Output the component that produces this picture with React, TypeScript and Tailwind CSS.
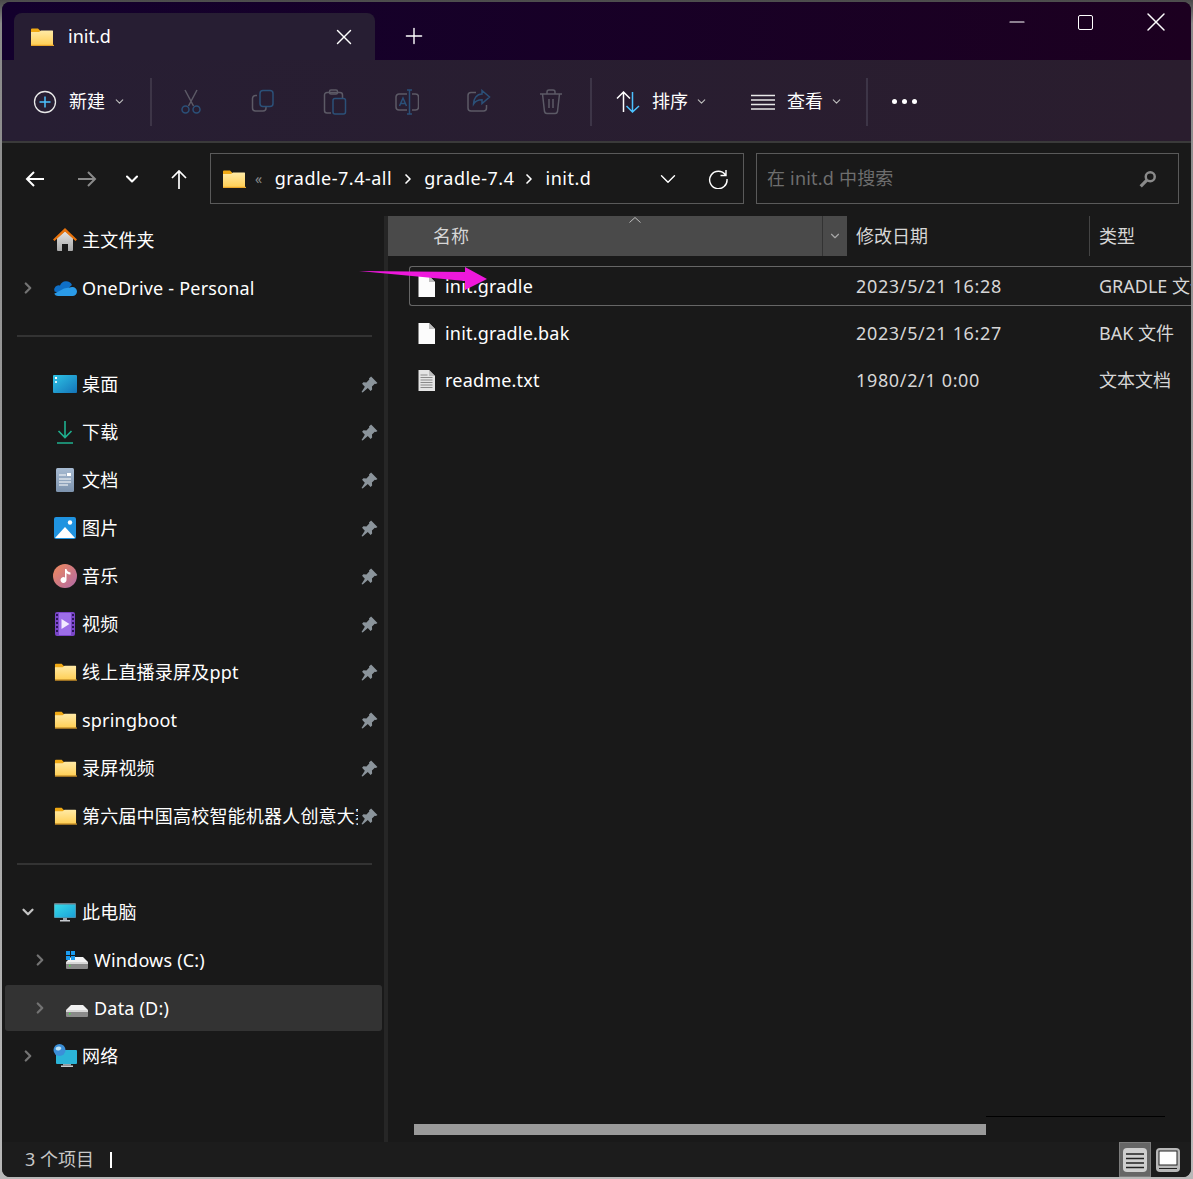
import type { ReactNode } from "react"
import { ChevronDown, ChevronRight, Minus, Plus, X } from "lucide-react"

const font = "font-['Noto_Sans','Noto_Sans_CJK_SC',sans-serif]"

function Folder({ className = "w-6 h-[18px]" }: { className?: string }) {
  return (
    <svg viewBox="0 0 24 18" className={className}>
      <defs>
        <linearGradient id="fold" x1="0" y1="0" x2="0" y2="1">
          <stop offset="0" stopColor="#ffeaa6" />
          <stop offset="1" stopColor="#ffcf56" />
        </linearGradient>
      </defs>
      <path d="M1 1.500Q1 .5 2 .5h6l2.500 2.500H23v3H1z" fill="#f0a914" />
      <path d="M1 4h8l2-1.500h11.500q.5 0 .5.5v13.500q0 .5-.5.5H1.500q-.5 0-.5-.5z" fill="url(#fold)" />
      <rect x="1" y="16.800" width="23" height="1.200" fill="#e9a52a" />
    </svg>
  )
}

// toolbar icons, greyed out because nothing is selected
const dim = "#5c5a66"
const dimBlue = "#2b5078"

function CutIcon() {
  return (
    <svg viewBox="0 0 24 26" className="w-6 h-[26px]" fill="none" strokeWidth="1.500">
      <path d="M6 1l8.500 16M18 1L9.500 17" stroke={dim} />
      <circle cx="6.500" cy="20.500" r="3.500" stroke={dimBlue} />
      <circle cx="17.500" cy="20.500" r="3.500" stroke={dimBlue} />
    </svg>
  )
}

function CopyIcon() {
  return (
    <svg viewBox="0 0 24 24" className="w-6 h-6" fill="none" strokeWidth="1.500">
      <path d="M6 6.500H4.500a3 3 0 0 0-3 3V19a3 3 0 0 0 3 3H12a3 3 0 0 0 3-3v-1" stroke={dim} />
      <rect x="9" y="1.500" width="13" height="16" rx="3" stroke={dimBlue} />
    </svg>
  )
}

function PasteIcon() {
  return (
    <svg viewBox="0 0 24 26" className="w-6 h-[26px]" fill="none" strokeWidth="1.500">
      <path d="M8 24H4a2.500 2.500 0 0 1-2.500-2.500V6A2.500 2.500 0 0 1 4 3.500h13A2.500 2.500 0 0 1 19.500 6v3" stroke={dim} />
      <rect x="6.500" y="1" width="8" height="4" rx="1.500" stroke={dim} />
      <rect x="10" y="9.500" width="12.500" height="15.500" rx="2" stroke={dimBlue} />
    </svg>
  )
}

function RenameIcon() {
  return (
    <svg viewBox="0 0 24 26" className="w-6 h-[26px]" fill="none" strokeWidth="1.500">
      <path d="M12 5H4a3 3 0 0 0-3 3v10a3 3 0 0 0 3 3h8M17 5h3.500a3 3 0 0 1 3 3v10a3 3 0 0 1-3 3H17" stroke={dim} />
      <path d="M12 1h5M14.500 1v24M12 25h5M4.500 17L8 9l3.500 8M5.800 14.500h4.400" stroke={dimBlue} />
    </svg>
  )
}

function ShareIcon() {
  return (
    <svg viewBox="0 0 24 24" className="w-6 h-6" fill="none" strokeWidth="1.500">
      <path d="M9 3.500H4a3 3 0 0 0-3 3V19a3 3 0 0 0 3 3h12.500a3 3 0 0 0 3-3v-3" stroke={dim} />
      <path d="M15 1.500l7.500 6.500-7.500 6.500v-3.800c-4 0-6.500 1-8.500 4.300 0-5 3-10 8.500-10z" stroke={dimBlue} />
    </svg>
  )
}

function TrashIcon() {
  return (
    <svg viewBox="0 0 24 26" className="w-6 h-[26px]" fill="none" stroke={dim} strokeWidth="1.500">
      <path d="M1 5h22M8 5V3a2 2 0 0 1 2-2h4a2 2 0 0 1 2 2v2M3.500 5l2 17.500a2.500 2.500 0 0 0 2.500 2h8a2.500 2.500 0 0 0 2.500-2L20.500 5M10 10v9M14 10v9" />
    </svg>
  )
}

function SortIcon() {
  return (
    <svg viewBox="0 0 24 22" className="w-6 h-[22px]" fill="none" strokeWidth="1.500">
      <path d="M7.500 21V1M1 7.500L7.500 1 14 7.500" stroke="#fff" />
      <path d="M16.500 1v20M10.500 15l6 6 6.500-6" stroke="#4cc2ff" />
    </svg>
  )
}

function PinIcon() {
  return (
    <svg viewBox="0 0 16 16" className="w-[17px] h-[17px]" fill="#8b949b">
      <path d="M9.500 0.500l6 6-1.500 1-1-.3-2.700 2.700.2 2.800-1.500 1.300-2.600-2.600L1.500 15.500.5 15l3.100-5-2.600-2.600 1.300-1.500 2.800.2L7.800 3.400l-.3-1.100z" />
    </svg>
  )
}

function HomeIcon() {
  return (
    <svg viewBox="0 0 24 24" className="w-6 h-6">
      <defs>
        <linearGradient id="wall" x1="0" y1="0" x2="0" y2="1">
          <stop offset="0" stopColor="#e4e4e4" />
          <stop offset="1" stopColor="#a8a8a8" />
        </linearGradient>
      </defs>
      <path d="M4 10l8-7 8 7v12a1 1 0 0 1-1 1h-4v-7H9v7H5a1 1 0 0 1-1-1z" fill="url(#wall)" />
      <path d="M0 11.500L12 0l12 11.500-1.500 1.500L12 3.500 1.500 13z" fill="#e8730c" />
    </svg>
  )
}

function CloudIcon() {
  return (
    <svg viewBox="0 0 24 16" className="w-6 h-4">
      <path d="M7 5.500A6.500 6.500 0 0 1 19 5l-8 7-6 .5-3.500-1A4.500 4.500 0 0 1 7 5.500z" fill="#0f6fc6" />
      <path d="M5 16a4.500 4.500 0 0 1-3.800-2.200L11 8.500l8-1.500a4.500 4.500 0 0 1 5 4.500A4.500 4.500 0 0 1 19.500 16z" fill="#2a9be8" />
    </svg>
  )
}

function DesktopIcon() {
  return (
    <svg viewBox="0 0 24 18" className="w-6 h-[18px]">
      <defs>
        <linearGradient id="desk" x1="0" y1="0" x2="1" y2="1">
          <stop offset="0" stopColor="#2ec4e6" />
          <stop offset="1" stopColor="#1473b8" />
        </linearGradient>
      </defs>
      <rect width="24" height="18" rx="1" fill="url(#desk)" />
      <rect x="2" y="2" width="2" height="2" fill="#fff" />
      <rect x="2" y="6" width="2" height="2" fill="#cfeffa" />
    </svg>
  )
}

function DownloadIcon() {
  return (
    <svg viewBox="0 0 16 23" className="w-4 h-[23px]" fill="none" stroke="#1fb08f" strokeWidth="1.600">
      <path d="M8 0v16M1.500 10L8 16.500 14.500 10M0 22h16" />
    </svg>
  )
}

function DocIcon() {
  return (
    <svg viewBox="0 0 18 24" className="w-[18px] h-6">
      <defs>
        <linearGradient id="doc" x1="0" y1="0" x2="0" y2="1">
          <stop offset="0" stopColor="#a7bbd2" />
          <stop offset="1" stopColor="#7d93ad" />
        </linearGradient>
      </defs>
      <rect width="18" height="24" rx="1.500" fill="url(#doc)" />
      <path d="M3 7h7M3 11h12M3 14h12M3 17h9" stroke="#fff" strokeWidth="1.200" />
      <rect x="11" y="5" width="4" height="3" fill="#fff" />
    </svg>
  )
}

function PictureIcon() {
  return (
    <svg viewBox="0 0 22 22" className="w-[22px] h-[22px]">
      <rect width="22" height="22" rx="2" fill="#1f93e0" />
      <circle cx="16" cy="5.500" r="2.200" fill="#fff" />
      <path d="M1 21L11 10l10 11z" fill="#fff" />
    </svg>
  )
}

function MusicIcon() {
  return (
    <svg viewBox="0 0 24 24" className="w-6 h-6">
      <defs>
        <linearGradient id="music" x1="0" y1="0" x2="1" y2="1">
          <stop offset="0" stopColor="#f0895a" />
          <stop offset="1" stopColor="#b06aa8" />
        </linearGradient>
      </defs>
      <circle cx="12" cy="12" r="12" fill="url(#music)" />
      <path d="M12 5h1.500c.3 2 1.500 3 4 3.500v2c-1.500 0-3-.5-4-1.500v7a3 3 0 1 1-1.500-2.600z" fill="#fff" />
    </svg>
  )
}

function VideoIcon() {
  return (
    <svg viewBox="0 0 20 24" className="w-5 h-6">
      <rect width="20" height="24" rx="2" fill="#7a45c8" />
      <rect x="4" y="1" width="12" height="22" fill="#9d6ee8" />
      <path d="M6.500 7l8 5-8 5z" fill="#f2eaff" />
      <path d="M1 3h2M1 7h2M1 11h2M1 15h2M1 19h2M17 3h2M17 7h2M17 11h2M17 15h2M17 19h2" stroke="#2a1458" strokeWidth="2" />
    </svg>
  )
}

function MonitorIcon() {
  return (
    <svg viewBox="0 0 22 19" className="w-[22px] h-[19px]">
      <defs>
        <linearGradient id="pc" x1="0" y1="0" x2="1" y2="1">
          <stop offset="0" stopColor="#37dbe9" />
          <stop offset="1" stopColor="#1a9fd6" />
        </linearGradient>
      </defs>
      <rect width="22" height="15" rx="1" fill="#6d7a84" />
      <rect x="0.500" y="1.500" width="21" height="13" fill="url(#pc)" />
      <rect x="9" y="15" width="4" height="2" fill="#9aa2a8" />
      <rect x="6" y="17" width="10" height="1.500" fill="#c8ccd0" />
    </svg>
  )
}

function DriveIcon({ windows }: { windows?: boolean }) {
  return (
    <svg viewBox="0 0 22 18" className="w-[22px] h-[18px]">
      <path d="M0 11L5 6h12l5 5z" fill="#f2f2f2" />
      <rect y="11" width="22" height="7" rx="1" fill="#8a8a8a" />
      <rect y="11" width="22" height="2" fill="#d8d8d8" />
      <rect x="3" y="14" width="1.500" height="1.500" fill="#3fe03f" />
      {windows && <path d="M0 0h4v4H0zM5 0h4v4H5zM0 5h4v4H0zM5 5h4v4H5z" fill="#1c9cef" />}
    </svg>
  )
}

function NetworkIcon() {
  return (
    <svg viewBox="0 0 24 24" className="w-6 h-6">
      <rect x="3" y="6" width="21" height="14" rx="1" fill="#2bb4d8" />
      <rect x="10" y="20" width="8" height="1.500" fill="#9aa2a8" />
      <rect x="8" y="21.500" width="12" height="1.500" fill="#c8ccd0" />
      <circle cx="6.500" cy="6" r="6" fill="#3b8fd8" />
      <path d="M3 3.500c2-1.500 4-1.500 5 0s-1 3-3 3-3-1.500-2-3z" fill="#bfe4f8" />
    </svg>
  )
}

function PageIcon({ lines }: { lines?: boolean }) {
  return (
    <svg viewBox="0 0 17 21" className="w-[17px] h-[21px]">
      <path d="M.5 0H11l6 6v15H.5z" fill={lines ? "#e4e4e4" : "#fcfcfc"} />
      <path d="M11 0l6 6h-6z" fill="#bdbdbd" />
      {lines && (
        <path d="M2.500 5h7M2.500 7.500h12M2.500 10h12M2.500 12.500h12M2.500 15h12M2.500 17.500h12" stroke="#8a8a8a" strokeWidth="1" />
      )}
    </svg>
  )
}

function Row({
  icon,
  label,
  chevron,
  indent,
  pinned,
  active,
}: {
  icon: ReactNode
  label: string
  chevron?: "right" | "down"
  indent?: boolean
  pinned?: boolean
  active?: boolean
}) {
  return (
    <div className="h-12 py-px">
      <div className={`flex h-full items-center rounded-[3px] ${active ? "bg-[#333333]" : ""} ${indent ? "pl-[26px]" : "pl-[14px]"}`}>
        <span className="flex w-[18px] justify-center">
          {chevron === "right" && <ChevronRight size={20} strokeWidth={3} className="text-[#737373]" />}
          {chevron === "down" && <ChevronDown size={20} strokeWidth={3} className="text-[#c4c4c4]" />}
        </span>
        <span className="ml-[16px] flex w-[24px] shrink-0 justify-center">{icon}</span>
        <span className={`ml-[5px] overflow-hidden whitespace-nowrap tracking-[0.2px] text-white ${pinned ? "w-[276px]" : ""}`}>{label}</span>
        {pinned && (
          <span className="ml-auto mr-[4px] flex w-[17px]">
            <PinIcon />
          </span>
        )}
      </div>
    </div>
  )
}

function Divider() {
  return (
    <div className="flex h-12 items-center pl-[12px] pr-[10px]">
      <div className="h-[2px] w-full bg-[#333333]" />
    </div>
  )
}

function ToolButton({ children }: { children: ReactNode }) {
  return <div className="flex w-[72px] justify-center">{children}</div>
}

function FileRow({ name, date, type, focused, lines }: { name: string; date: string; type: string; focused?: boolean; lines?: boolean }) {
  return (
    <div className={`ml-[21px] flex h-10 items-center rounded-l-[3px] border-y border-l ${focused ? "border-[#666666]" : "border-transparent"}`}>
      <span className="ml-2 flex w-[17px] shrink-0">
        <PageIcon lines={lines} />
      </span>
      <span className="ml-[10px] w-[411px] shrink-0 whitespace-nowrap tracking-[0.2px] text-white">{name}</span>
      <span className="w-[243px] shrink-0 whitespace-nowrap tracking-[0.65px] text-[#d6d6d6]">{date}</span>
      <span className="shrink-0 whitespace-nowrap text-[#d6d6d6]">{type}</span>
    </div>
  )
}

export default function App() {
  return (
    <div className={`h-[1179px] w-[1193px] overflow-hidden bg-gradient-to-b from-[#4a4a4a] via-[#8a8a8a] via-[2%] to-[#b8b8b8] p-[2px] text-[18px] ${font}`}>
      <div className="relative flex h-full w-full flex-col overflow-hidden rounded-[8px] bg-[#191919]">
        {/* title bar with tab */}
        <div className="flex h-[58px] shrink-0 items-end bg-gradient-to-r from-[#13002d] to-[#1c0020]">
          <div className="ml-[12px] flex h-[47px] w-[361px] items-center rounded-t-[8px] bg-[#271e33]">
            <span className="ml-[16px]">
              <Folder />
            </span>
            <span className="ml-[14px] text-white">init.d</span>
            <X size={26} strokeWidth={1.300} className="ml-auto mr-[18px] text-white" />
          </div>
          <div className="mb-[12px] ml-[27px] flex h-[24px] w-[24px] items-center justify-center">
            <Plus size={26} strokeWidth={1.300} className="shrink-0 text-white" />
          </div>
          <div className="mb-[26px] ml-auto flex h-[24px] items-center">
            <Minus size={24} strokeWidth={1.200} className="text-white" />
            <span className="ml-[49px] h-[15px] w-[15px] rounded-[2px] border-[1.500px] border-white" />
            <X size={32} strokeWidth={1.100} className="ml-[47px] mr-[19px] text-white" />
          </div>
        </div>

        {/* command bar */}
        <div className="flex h-[81px] shrink-0 items-center bg-gradient-to-r from-[#271e33] to-[#2a1d2e] pt-[2px]">
          <svg viewBox="0 0 24 24" className="ml-[31px] h-6 w-6" fill="none">
            <circle cx="12" cy="12" r="10.500" stroke="#e8e8e8" strokeWidth="1.300" />
            <path d="M12 6.500v11M6.500 12h11" stroke="#4cc2ff" strokeWidth="1.500" />
          </svg>
          <span className="ml-[12px] text-white">新建</span>
          <ChevronDown size={13} className="ml-[8px] text-[#bdbdbd]" />
          <div className="ml-[24px] h-[48px] w-[2px] bg-[#3d3547]" />
          <div className="ml-[3px] flex">
            <ToolButton><CutIcon /></ToolButton>
            <ToolButton><CopyIcon /></ToolButton>
            <ToolButton><PasteIcon /></ToolButton>
            <ToolButton><RenameIcon /></ToolButton>
            <ToolButton><ShareIcon /></ToolButton>
            <ToolButton><TrashIcon /></ToolButton>
          </div>
          <div className="ml-[3px] h-[48px] w-[2px] bg-[#3d3547]" />
          <span className="ml-[24px]"><SortIcon /></span>
          <span className="ml-[12px] text-white">排序</span>
          <ChevronDown size={13} className="ml-[7px] text-[#bdbdbd]" />
          <svg viewBox="0 0 24 16" className="ml-[43px] h-4 w-6" stroke="#e8e8e8" strokeWidth="1.300">
            <path d="M0 1.500h24M0 6h24M0 10.500h24M0 15h24" />
          </svg>
          <span className="ml-[12px] text-white">查看</span>
          <ChevronDown size={13} className="ml-[7px] text-[#bdbdbd]" />
          <div className="ml-[23px] h-[48px] w-[2px] bg-[#3d3547]" />
          <div className="ml-[24px] flex gap-[5px]">
            <span className="h-[5px] w-[5px] rounded-full bg-white" />
            <span className="h-[5px] w-[5px] rounded-full bg-white" />
            <span className="h-[5px] w-[5px] rounded-full bg-white" />
          </div>
        </div>
        <div className="h-[2px] shrink-0 bg-[#3a3a3a]" />

        {/* address bar */}
        <div className="flex h-[73px] shrink-0 items-start pt-[10px]">
          <div className="flex h-[51px] w-[208px] shrink-0 items-center text-white">
            <svg viewBox="0 0 20 20" className="ml-[23px] h-5 w-5" fill="none" stroke="#fff" strokeWidth="2">
              <path d="M19 10H2M9 3l-7 7 7 7" />
            </svg>
            <svg viewBox="0 0 20 20" className="ml-[32px] h-5 w-5" fill="none" stroke="#8a8a8a" strokeWidth="2">
              <path d="M1 10h17M11 3l7 7-7 7" />
            </svg>
            <ChevronDown size={20} strokeWidth={2.500} className="ml-[25px]" />
            <svg viewBox="0 0 20 20" className="ml-[27px] h-5 w-5" fill="none" stroke="#fff" strokeWidth="1.700">
              <path d="M10 20V2M3 9l7-7 7 7" />
            </svg>
          </div>
          <div className="flex h-[51px] w-[534px] shrink-0 items-center border border-[#5a5a5a] tracking-[0.5px] text-white">
            <span className="ml-[11px] flex"><Folder /></span>
            <span className="ml-[9px] text-[14px] text-[#8a8a8a]">«</span>
            <span className="ml-[12px]">gradle-7.4-all</span>
            <ChevronRight size={16} strokeWidth={2.500} className="ml-[8px]" />
            <span className="ml-[8px]">gradle-7.4</span>
            <ChevronRight size={16} strokeWidth={2.500} className="ml-[7px]" />
            <span className="ml-[8px]">init.d</span>
            <ChevronDown size={26} strokeWidth={1.300} className="ml-auto" />
            <svg viewBox="0 0 20 20" className="ml-[27px] mr-[15px] h-5 w-5" fill="none" stroke="#fff" strokeWidth="1.400">
              <path d="M17.500 6A8.700 8.700 0 1 0 19 10M18 1v5.500h-5.500" />
            </svg>
          </div>
          <div className="ml-[12px] flex h-[51px] w-[423px] shrink-0 items-center border border-[#5a5a5a]">
            <span className="ml-[10px] tracking-[0.2px] text-[#6e6e6e]">在 init.d 中搜索</span>
            <svg viewBox="0 0 16 16" className="ml-auto mr-[21px] h-[18px] w-[18px]" fill="none" stroke="#8a8a8a">
              <circle cx="10" cy="6" r="4" strokeWidth="2.200" />
              <path d="M7 9l-5.500 5.500" strokeWidth="2.800" />
            </svg>
          </div>
        </div>

        {/* navigation pane and file list */}
        <div className="flex min-h-0 flex-1">
          <div className="w-[382px] shrink-0 pl-[3px] pr-[2px]">
            <Row icon={<HomeIcon />} label="主文件夹" />
            <Row icon={<CloudIcon />} label="OneDrive - Personal" chevron="right" />
            <Divider />
            <Row icon={<DesktopIcon />} label="桌面" pinned />
            <Row icon={<DownloadIcon />} label="下载" pinned />
            <Row icon={<DocIcon />} label="文档" pinned />
            <Row icon={<PictureIcon />} label="图片" pinned />
            <Row icon={<MusicIcon />} label="音乐" pinned />
            <Row icon={<VideoIcon />} label="视频" pinned />
            <Row icon={<Folder className="h-[18px] w-[23px]" />} label="线上直播录屏及ppt" pinned />
            <Row icon={<Folder className="h-[18px] w-[23px]" />} label="springboot" pinned />
            <Row icon={<Folder className="h-[18px] w-[23px]" />} label="录屏视频" pinned />
            <Row icon={<Folder className="h-[18px] w-[23px]" />} label="第六届中国高校智能机器人创意大赛" pinned />
            <Divider />
            <Row icon={<MonitorIcon />} label="此电脑" chevron="down" />
            <Row icon={<DriveIcon windows />} label="Windows (C:)" chevron="right" indent />
            <Row icon={<DriveIcon />} label="Data (D:)" chevron="right" indent active />
            <Row icon={<NetworkIcon />} label="网络" chevron="right" />
          </div>
          <div className="w-[4px] shrink-0 bg-[#262626]" />
          <div className="flex min-w-0 flex-1 flex-col overflow-hidden">
            <div className="flex h-10 shrink-0 items-center text-[#d6d6d6]">
              <div className="relative flex h-full w-[459px] shrink-0 items-center bg-[#4a4a4a]">
                <span className="ml-[45px]">名称</span>
                <svg viewBox="0 0 12 6" className="absolute left-[241px] top-[1px] h-[6px] w-[12px]" fill="none" stroke="#bdbdbd">
                  <path d="M.5 5.500L6 .5l5.500 5" />
                </svg>
                <div className="ml-auto flex h-full w-[25px] items-center justify-center border-l border-[#333333]">
                  <ChevronDown size={14} className="text-[#a8a8a8]" />
                </div>
              </div>
              <span className="ml-[9px] w-[233px]">修改日期</span>
              <div className="h-full w-px bg-[#444444]" />
              <span className="ml-[9px]">类型</span>
            </div>
            <div className="mt-[10px] flex flex-1 flex-col gap-[7px]">
              <FileRow name="init.gradle" date="2023/5/21 16:28" type="GRADLE 文件" focused />
              <FileRow name="init.gradle.bak" date="2023/5/21 16:27" type="BAK 文件" />
              <FileRow name="readme.txt" date="1980/2/1 0:00" type="文本文档" lines />
            </div>
            <div className="h-[26px] shrink-0">
              <div className="ml-[598px] h-px w-[179px] bg-black" />
              <div className="ml-[26px] mt-[7px] h-[11px] w-[572px] bg-[#9a9a9a]" />
            </div>
          </div>
        </div>

        {/* status bar */}
        <div className="flex h-[35px] shrink-0 items-center bg-[#1c1c1c] text-[#c8c8c8]">
          <span className="ml-[23px]">3 个项目</span>
          <span className="ml-[16px] h-[16px] w-[2px] bg-white" />
          <div className="ml-auto flex h-full items-center">
            <div className="flex h-full w-[32px] items-center justify-center border border-[#7c7c7c] bg-[#666666]">
              <svg viewBox="0 0 24 24" className="h-6 w-6">
                <rect width="24" height="24" rx="4" fill="#cfcfcf" />
                <path d="M3 6h18M3 10.500h18M3 15h18M3 19.500h18" stroke="#222" strokeWidth="1.300" />
              </svg>
            </div>
            <svg viewBox="0 0 24 24" className="ml-[5px] mr-[11px] h-6 w-6">
              <rect width="24" height="24" rx="4" fill="#b8b8b8" />
              <rect x="3" y="3" width="18" height="14" fill="#fff" stroke="#222" />
              <path d="M3 20.500h18" stroke="#222" />
            </svg>
          </div>
        </div>

        {/* annotation arrow drawn over the screenshot */}
        <svg viewBox="0 0 130 26" className="absolute left-[357px] top-[263px] h-[26px] w-[130px]">
          <path d="M0 6l106 1V2L128 14 106 25V16z" fill="#ee18dc" />
        </svg>
      </div>
    </div>
  )
}
